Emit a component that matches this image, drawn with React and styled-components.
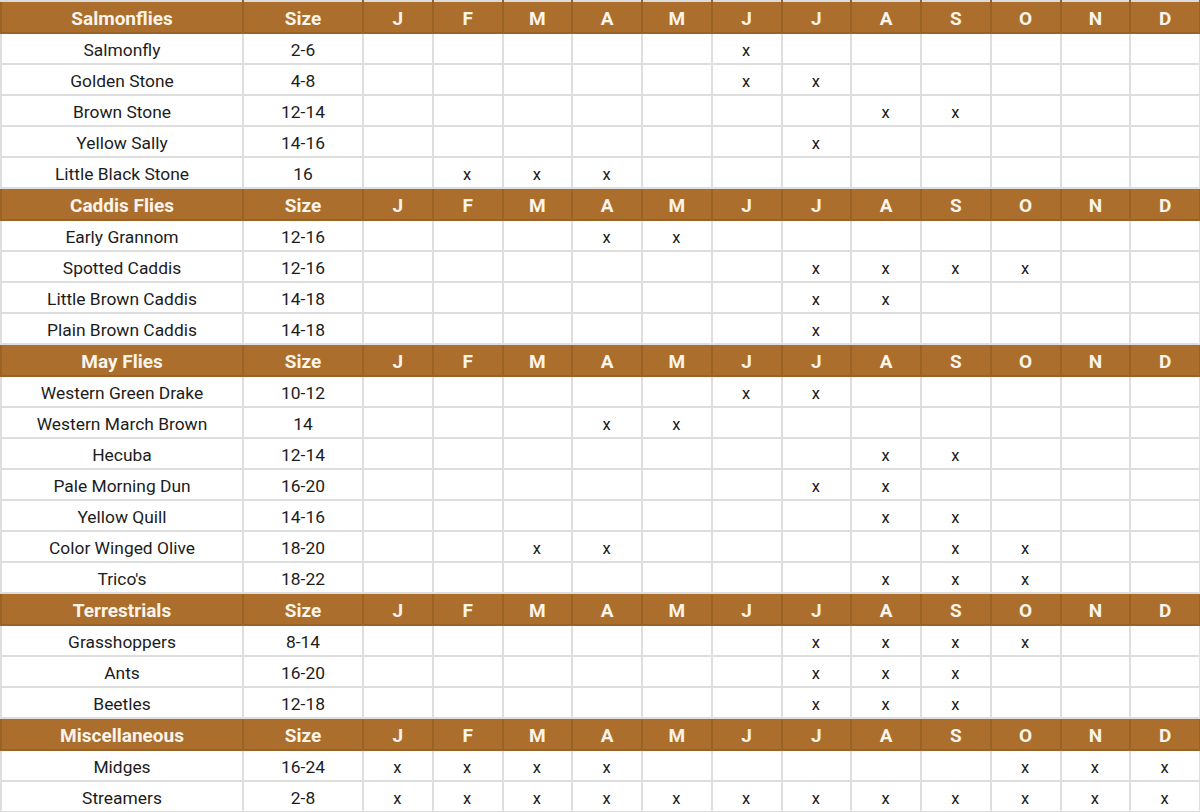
import React from "react";
import styled, { createGlobalStyle } from "styled-components";

const Global = createGlobalStyle`
  html, body { margin: 0; padding: 0; background: #ffffff; }
  body { font-family: Roboto, "Liberation Sans", Arial, sans-serif; }
`;

const MONTHS = ["J", "F", "M", "A", "M", "J", "J", "A", "S", "O", "N", "D"];

const SECTIONS = [
  {
    title: "Salmonflies",
    rows: [
      ["Salmonfly", "2-6", [5]],
      ["Golden Stone", "4-8", [5, 6]],
      ["Brown Stone", "12-14", [7, 8]],
      ["Yellow Sally", "14-16", [6]],
      ["Little Black Stone", "16", [1, 2, 3]],
    ],
  },
  {
    title: "Caddis Flies",
    rows: [
      ["Early Grannom", "12-16", [3, 4]],
      ["Spotted Caddis", "12-16", [6, 7, 8, 9]],
      ["Little Brown Caddis", "14-18", [6, 7]],
      ["Plain Brown Caddis", "14-18", [6]],
    ],
  },
  {
    title: "May Flies",
    rows: [
      ["Western Green Drake", "10-12", [5, 6]],
      ["Western March Brown", "14", [3, 4]],
      ["Hecuba", "12-14", [7, 8]],
      ["Pale Morning Dun", "16-20", [6, 7]],
      ["Yellow Quill", "14-16", [7, 8]],
      ["Color Winged Olive", "18-20", [2, 3, 8, 9]],
      ["Trico's", "18-22", [7, 8, 9]],
    ],
  },
  {
    title: "Terrestrials",
    rows: [
      ["Grasshoppers", "8-14", [6, 7, 8, 9]],
      ["Ants", "16-20", [6, 7, 8]],
      ["Beetles", "12-18", [6, 7, 8]],
    ],
  },
  {
    title: "Miscellaneous",
    rows: [
      ["Midges", "16-24", [0, 1, 2, 3, 9, 10, 11]],
      ["Streamers", "2-8", [0, 1, 2, 3, 4, 5, 6, 7, 8, 9, 10, 11]],
    ],
  },
];

const Table = styled.table`
  width: 1199px;
  border-collapse: collapse;
  table-layout: fixed;
`;

const NameCol = styled.col`
  width: 242px;
`;
const SizeCol = styled.col`
  width: 120px;
`;
const MonthCol = styled.col`
  width: 69.75px;
`;

const HeadRow = styled.tr`
  background: #ab6e2c;
  height: 32px;
`;

const HeadCell = styled.th`
  border: 2px solid #9a6326;
  border-top-color: ${(p) => (p.$first ? "#dcdcdc" : "#9a6326")};
  color: #fbf4ea;
  font-family: Roboto, "Liberation Sans", Arial, sans-serif;
  font-weight: 700;
  font-size: 19px;
  text-align: center;
  vertical-align: middle;
  padding: 2px 0 0;
  line-height: 1;
`;

const Row = styled.tr`
  background: #ffffff;
  height: 31px;
`;

const Cell = styled.td`
  border: 2px solid #dedede;
  color: #1c1c1c;
  font-family: Roboto, "Liberation Sans", Arial, sans-serif;
  font-weight: 400;
  font-size: ${(p) => (p.$mark ? "16.5px" : "17.4px")};
  text-align: center;
  vertical-align: middle;
  padding: ${(p) => (p.$mark ? "5px 1px 0 0" : "4px 0 0")};
  line-height: 1;
  white-space: nowrap;
`;

export default function App() {
  return (
    <>
      <Global />
      <Table>
        <colgroup>
          <NameCol />
          <SizeCol />
          {MONTHS.map((_, i) => (
            <MonthCol key={i} />
          ))}
        </colgroup>
        <tbody>
          {SECTIONS.map((sec, si) => (
            <React.Fragment key={sec.title}>
              <HeadRow>
                <HeadCell $first={si === 0}>{sec.title}</HeadCell>
                <HeadCell $first={si === 0}>Size</HeadCell>
                {MONTHS.map((m, i) => (
                  <HeadCell key={i} $first={si === 0}>
                    {m}
                  </HeadCell>
                ))}
              </HeadRow>
              {sec.rows.map(([name, size, marks]) => (
                <Row key={name}>
                  <Cell>{name}</Cell>
                  <Cell>{size}</Cell>
                  {MONTHS.map((_, i) => (
                    <Cell key={i} $mark>
                      {marks.includes(i) ? "x" : ""}
                    </Cell>
                  ))}
                </Row>
              ))}
            </React.Fragment>
          ))}
        </tbody>
      </Table>
    </>
  );
}
